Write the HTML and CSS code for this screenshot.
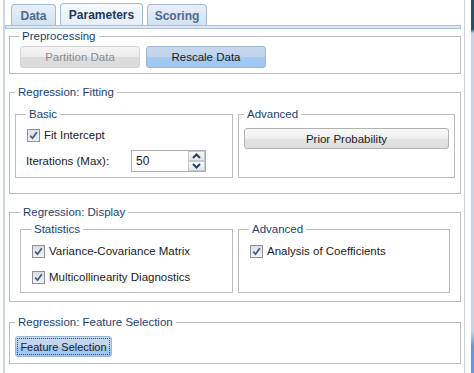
FILE: index.html
```html
<!DOCTYPE html>
<html>
<head>
<meta charset="utf-8">
<link rel="stylesheet" href="styles.css">
</head>
<body>
<div class="frame">
  <div class="main">
    <div class="tabs">
      <div class="tab tab-data">Data</div>
      <div class="tab tab-params selected">Parameters</div>
      <div class="tab tab-scoring">Scoring</div>
    </div>
    <div class="panel">
      <div class="band"></div>
      <div class="content">
        <fieldset class="group g-pre">
          <legend>Preprocessing</legend>
          <div class="pre-body">
            <button class="btn btn-disabled">Partition Data</button>
            <button class="btn btn-blue">Rescale Data</button>
          </div>
        </fieldset>

        <fieldset class="group g-fit">
          <legend>Regression: Fitting</legend>
          <div class="fit-body">
            <fieldset class="sub sub-basic">
              <legend>Basic</legend>
              <div class="basic-body">
                <label class="check-row"><span class="cb"><svg width="9" height="9" viewBox="0 0 9 9"><path d="M1.2 4.6 L3.5 7.2 L7.8 1.2" fill="none" stroke="#3d5a8c" stroke-width="1.7"/></svg></span>Fit Intercept</label>
                <div class="iter-row">
                  <span class="iter-label">Iterations (Max):</span>
                  <div class="spinner">
                    <span class="spin-val">50</span>
                    <div class="spin-btns">
                      <span class="spin-btn"><svg width="9" height="6" viewBox="0 0 9 6"><path d="M1 5 L4.5 1.5 L8 5" fill="none" stroke="#2a3f66" stroke-width="2"/></svg></span>
                      <span class="spin-btn"><svg width="9" height="6" viewBox="0 0 9 6"><path d="M1 1 L4.5 4.5 L8 1" fill="none" stroke="#2a3f66" stroke-width="2"/></svg></span>
                    </div>
                  </div>
                </div>
              </div>
            </fieldset>
            <fieldset class="sub sub-adv1">
              <legend>Advanced</legend>
              <div class="adv1-body">
                <button class="btn btn-grey btn-prior">Prior Probability</button>
              </div>
            </fieldset>
          </div>
        </fieldset>

        <fieldset class="group g-disp">
          <legend>Regression: Display</legend>
          <div class="disp-body">
            <fieldset class="sub sub-stats">
              <legend>Statistics</legend>
              <div class="stats-body">
                <label class="check-row"><span class="cb"><svg width="9" height="9" viewBox="0 0 9 9"><path d="M1.2 4.6 L3.5 7.2 L7.8 1.2" fill="none" stroke="#3d5a8c" stroke-width="1.7"/></svg></span>Variance-Covariance Matrix</label>
                <label class="check-row"><span class="cb"><svg width="9" height="9" viewBox="0 0 9 9"><path d="M1.2 4.6 L3.5 7.2 L7.8 1.2" fill="none" stroke="#3d5a8c" stroke-width="1.7"/></svg></span>Multicollinearity Diagnostics</label>
              </div>
            </fieldset>
            <fieldset class="sub sub-adv2">
              <legend>Advanced</legend>
              <div class="adv2-body">
                <label class="check-row"><span class="cb"><svg width="9" height="9" viewBox="0 0 9 9"><path d="M1.2 4.6 L3.5 7.2 L7.8 1.2" fill="none" stroke="#3d5a8c" stroke-width="1.7"/></svg></span>Analysis of Coefficients</label>
              </div>
            </fieldset>
          </div>
        </fieldset>

        <fieldset class="group g-feat">
          <legend>Regression: Feature Selection</legend>
          <div class="feat-body">
            <button class="btn btn-blue btn-feat"><span class="focus">Feature Selection</span></button>
          </div>
        </fieldset>
      </div>
    </div>
  </div>
  <div class="edge"></div>
</div>
</body>
</html>
```
FILE: styles.css
```css
html, body {
  margin: 0;
  padding: 0;
  background: #ffffff;
}
body {
  font-family: "Liberation Sans", Arial, sans-serif;
  font-size: 11.5px;
  color: #1b1b1b;
}
.frame {
  display: flex;
  width: 474px;
  height: 373px;
  overflow: hidden;
  background: #ffffff;
}
.main {
  width: 459px;
  margin-left: 3px;
  border-left: 2px solid #cdd7e3;
  border-right: 1px solid #cdd3da;
  display: flex;
  flex-direction: column;
}
.edge {
  width: 9px;
  box-sizing: border-box;
  border-right: 3px solid transparent;
  border-image: linear-gradient(to bottom, #1d5566 0, #1d5566 30px, #c9d4e2 34px, #c9d4e2 330px, #5e9ce0 345px, #5e9ce0 100%) 1;
}

/* tabs */
.tabs {
  height: 25px;
  display: flex;
  align-items: flex-end;
  padding-left: 6px;
  box-sizing: border-box;
}
.tab {
  box-sizing: border-box;
  height: 21px;
  border: 1px solid #a3b9d4;
  border-bottom: none;
  border-radius: 4px 4px 0 0;
  background: linear-gradient(to bottom, #e8eff8 0%, #d3e1f1 100%);
  color: #4b6a92;
  font-weight: bold;
  font-size: 12px;
  display: flex;
  align-items: center;
  justify-content: center;
  padding-top: 1px;
  white-space: nowrap;
}
.tab-data { width: 45px; margin-right: 4px; }
.tab-params { width: 83px; margin-right: 4px; }
.tab-scoring { width: 60px; }
.tab.selected {
  height: 22px;
  background: linear-gradient(to bottom, #f7fafd 0%, #e6eef8 100%);
  color: #1e3861;
}

/* panel */
.panel {
  flex: 1;
  display: flex;
  flex-direction: column;
}
.band {
  height: 4px;
  margin-right: 3px;
  box-sizing: border-box;
  border: 1px solid #a9bfdb;
  background: #dde8f5;
}
.content {
  padding: 0 3px 0 4px;
  display: flex;
  flex-direction: column;
}

/* fieldsets */
fieldset {
  margin: 0;
  padding: 0;
  min-width: 0;
  border: 1px solid #bcbcbc;
}
legend {
  padding: 0 3px;
  line-height: 14px;
  height: 14px;
  color: #213f72;
  font-size: 11.5px;
  white-space: nowrap;
}
.group { margin-top: 11px; }
.g-pre { margin-top: 0; }
.g-pre > legend { margin-left: 9px; }
.g-fit > legend { margin-left: 5px; }
.g-disp > legend { margin-left: 10px; }
.g-feat { margin-top: 13px; }
.g-feat > legend { margin-left: 5px; }
.sub-basic > legend { margin-left: 10px; }
.sub-adv1 > legend { margin-left: 5px; }
.sub-stats > legend { margin-left: 10px; }
.sub-adv2 > legend { margin-left: 10px; }

.pre-body {
  display: flex;
  gap: 6px;
  padding: 3px 10px 5px 10px;
}
.fit-body {
  display: flex;
  gap: 5px;
  padding: 8px 5px 15px 5px;
}
.sub-basic { width: 218px; box-sizing: border-box; }
.sub-adv1 { width: 217px; box-sizing: border-box; }
.disp-body {
  display: flex;
  gap: 5px;
  padding: 3px 10px 8px 10px;
}
.sub-stats { width: 213px; box-sizing: border-box; }
.sub-adv2 { width: 212px; box-sizing: border-box; }
.feat-body {
  padding: 7px 5px 6px 5px;
}

/* buttons */
.btn {
  font-family: "Liberation Sans", Arial, sans-serif;
  font-size: 11.5px;
  margin: 0;
  padding: 0;
  box-sizing: border-box;
  border-radius: 3px;
  display: flex;
  align-items: center;
  justify-content: center;
  white-space: nowrap;
}
.pre-body .btn { width: 120px; height: 22px; }
.btn-disabled {
  border: 1px solid #d4d4d4;
  background: linear-gradient(to bottom, #f4f4f4 0%, #ececec 50%, #dcdcdc 51%, #dcdcdc 100%);
  color: #8d8d8d;
}
.btn-blue {
  border: 1px solid #9db6d4;
  background: linear-gradient(to bottom, #c6d8ee 0%, #c0d4ec 50%, #a3c9f4 51%, #a0c7f3 100%);
  color: #1b1b1b;
}
.btn-grey {
  border: 1px solid #b1b1b1;
  background: linear-gradient(to bottom, #f7f7f7 0%, #efefef 50%, #e3e3e3 51%, #dedede 100%);
  color: #1b1b1b;
}
.adv1-body { padding: 7px 5px 0 5px; }
.btn-prior { width: 205px; height: 21px; }
.btn-feat {
  width: 97px;
  height: 21px;
  padding: 1px;
  font-size: 11px;
}
.btn-feat .focus {
  flex: 1;
  align-self: stretch;
  display: flex;
  align-items: center;
  justify-content: center;
  border: 1px dotted #3a4a60;
  white-space: nowrap;
}

/* checkboxes */
.check-row {
  display: flex;
  align-items: center;
  height: 16px;
  white-space: nowrap;
}
.cb {
  width: 13px;
  height: 13px;
  box-sizing: border-box;
  border: 1px solid #8f9195;
  background: linear-gradient(to bottom, #dcdee2 0%, #f1f2f4 100%);
  display: flex;
  align-items: center;
  justify-content: center;
  margin-right: 4px;
  flex-shrink: 0;
}
.basic-body {
  padding: 6px 4px 5px 11px;
  display: flex;
  flex-direction: column;
  gap: 7px;
}
.iter-row {
  display: flex;
  align-items: center;
  margin-left: -1px;
}
.iter-label { width: 105px; white-space: nowrap; }
.spinner {
  width: 75px;
  height: 22px;
  box-sizing: border-box;
  border: 1px solid #abadb3;
  display: flex;
  background: #fff;
}
.spin-val {
  flex: 1;
  padding-left: 4px;
  display: flex;
  align-items: center;
  font-size: 12px;
}
.spin-btns {
  width: 17px;
  display: flex;
  flex-direction: column;
}
.spin-btn {
  flex: 1;
  box-sizing: border-box;
  border: 1px solid #c6c9ce;
  background: linear-gradient(to bottom, #f6f7f8 0%, #e4e6e9 100%);
  display: flex;
  align-items: center;
  justify-content: center;
}
.stats-body {
  padding: 7px 4px 7px 11px;
  display: flex;
  flex-direction: column;
  gap: 10px;
}
.adv2-body {
  padding: 7px 4px 7px 11px;
}
```
